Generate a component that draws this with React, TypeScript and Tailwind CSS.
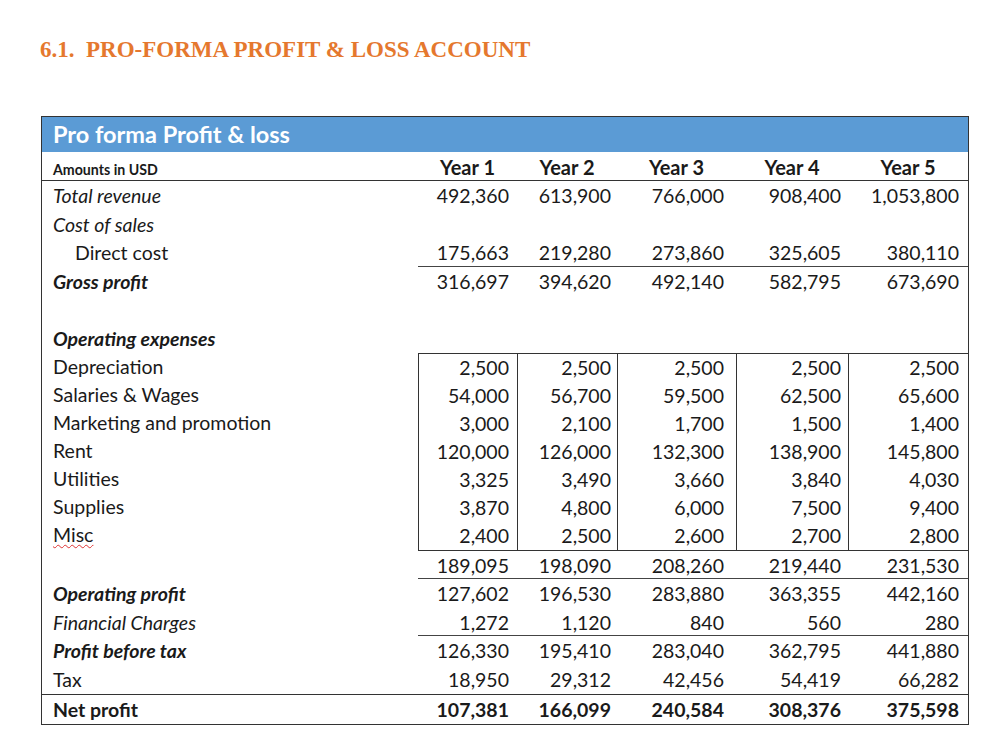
const cols = "grid grid-cols-[376px_99px_100px_119px_112px_120px]";
const pads = ["pr-[8px]", "pr-[6px]", "pr-[12px]", "pr-[7px]", "pr-[9px]"];

type Row = {
  label: string;
  style?: string;
  values?: string[];
  line?: boolean;
};

const Nums = ({ values, bold }: { values?: string[]; bold?: boolean }) => (
  <>
    {[0, 1, 2, 3, 4].map((i) => (
      <div
        key={i}
        className={`flex items-center justify-end text-[19.5px] ${pads[i]} ${bold ? "font-bold" : ""}`}
      >
        {values ? values[i] : ""}
      </div>
    ))}
  </>
);

const Line = ({ row }: { row: Row }) => (
  <div className={`${cols} h-[28.6px] relative`}>
    <div className={`flex items-center pl-[11px] ${row.style ?? ""}`}>{row.label}</div>
    <Nums values={row.values} />
    {row.line && (
      <div className="absolute left-[376px] right-0 bottom-0 border-b border-[#444]" />
    )}
  </div>
);

const top: Row[] = [
  { label: "Total revenue", style: "italic", values: ["492,360", "613,900", "766,000", "908,400", "1,053,800"] },
  { label: "Cost of sales", style: "italic" },
  { label: "Direct cost", style: "pl-[33px]", values: ["175,663", "219,280", "273,860", "325,605", "380,110"], line: true },
  { label: "Gross profit", style: "italic font-bold", values: ["316,697", "394,620", "492,140", "582,795", "673,690"] },
  { label: "" },
  { label: "Operating expenses", style: "italic font-bold" },
];

const box: [string, string[]][] = [
  ["Depreciation", ["2,500", "2,500", "2,500", "2,500", "2,500"]],
  ["Salaries & Wages", ["54,000", "56,700", "59,500", "62,500", "65,600"]],
  ["Marketing and promotion", ["3,000", "2,100", "1,700", "1,500", "1,400"]],
  ["Rent", ["120,000", "126,000", "132,300", "138,900", "145,800"]],
  ["Utilities", ["3,325", "3,490", "3,660", "3,840", "4,030"]],
  ["Supplies", ["3,870", "4,800", "6,000", "7,500", "9,400"]],
  ["Misc", ["2,400", "2,500", "2,600", "2,700", "2,800"]],
];

const bottom: Row[] = [
  { label: "", values: ["189,095", "198,090", "208,260", "219,440", "231,530"], line: true },
  { label: "Operating profit", style: "italic font-bold", values: ["127,602", "196,530", "283,880", "363,355", "442,160"] },
  { label: "Financial Charges", style: "italic", values: ["1,272", "1,120", "840", "560", "280"], line: true },
  { label: "Profit before tax", style: "italic font-bold", values: ["126,330", "195,410", "283,040", "362,795", "441,880"] },
  { label: "Tax", values: ["18,950", "29,312", "42,456", "54,419", "66,282"] },
];

export default function App() {
  return (
    <div className="w-[1000px] h-[750px] bg-white text-[#1a1a1a] font-['Lato',sans-serif] text-[19.5px] overflow-hidden">
      <h1 className="pl-[40px] pt-[35px] leading-[30px] font-['Liberation_Serif',serif] font-bold text-[23px] text-[#E5782E]">
        6.1.&nbsp; PRO-FORMA PROFIT &amp; LOSS ACCOUNT
      </h1>
      <div className="ml-[41px] mt-[51px] w-[928px] border border-[#333]">
        <div className="h-[35px] bg-[#5B9BD5] text-white font-bold text-[23.5px] flex items-center pl-[11px]">
          Pro forma Profit &amp; loss
        </div>
        <div className={`${cols} h-[29px] border-b border-[#333] font-bold`}>
          <div className="flex items-end pb-[2px] pl-[11px] text-[14.2px]">Amounts in USD</div>
          {["Year 1", "Year 2", "Year 3", "Year 4", "Year 5"].map((y) => (
            <div key={y} className="flex items-center justify-center text-[20px]">
              {y}
            </div>
          ))}
        </div>
        {top.map((r, i) => (
          <Line key={i} row={r} />
        ))}
        <div className="flex">
          <div className="w-[376px] flex flex-col">
            {box.map(([l]) => (
              <div key={l} className="h-[28px] flex items-center pl-[11px]">
                {l === "Misc" ? (
                  <span className="underline decoration-wavy decoration-[#d33] decoration-1 underline-offset-2">Misc</span>
                ) : (
                  l
                )}
              </div>
            ))}
          </div>
          <div className="flex-1 grid grid-cols-[99px_100px_119px_112px_120px] border-t border-b border-[#333]">
            {[0, 1, 2, 3, 4].map((c) => (
              <div key={c} className="flex flex-col border-l border-[#333]">
                {box.map(([l, v]) => (
                  <div key={l} className={`h-[28px] flex items-center justify-end ${pads[c]}`}>
                    {v[c]}
                  </div>
                ))}
              </div>
            ))}
          </div>
        </div>
        {bottom.map((r, i) => (
          <Line key={i} row={r} />
        ))}
        <div className={`${cols} h-[30px] border-t border-[#333] font-bold`}>
          <div className="flex items-center pl-[11px]">Net profit</div>
          <Nums values={["107,381", "166,099", "240,584", "308,376", "375,598"]} bold />
        </div>
      </div>
    </div>
  );
}
